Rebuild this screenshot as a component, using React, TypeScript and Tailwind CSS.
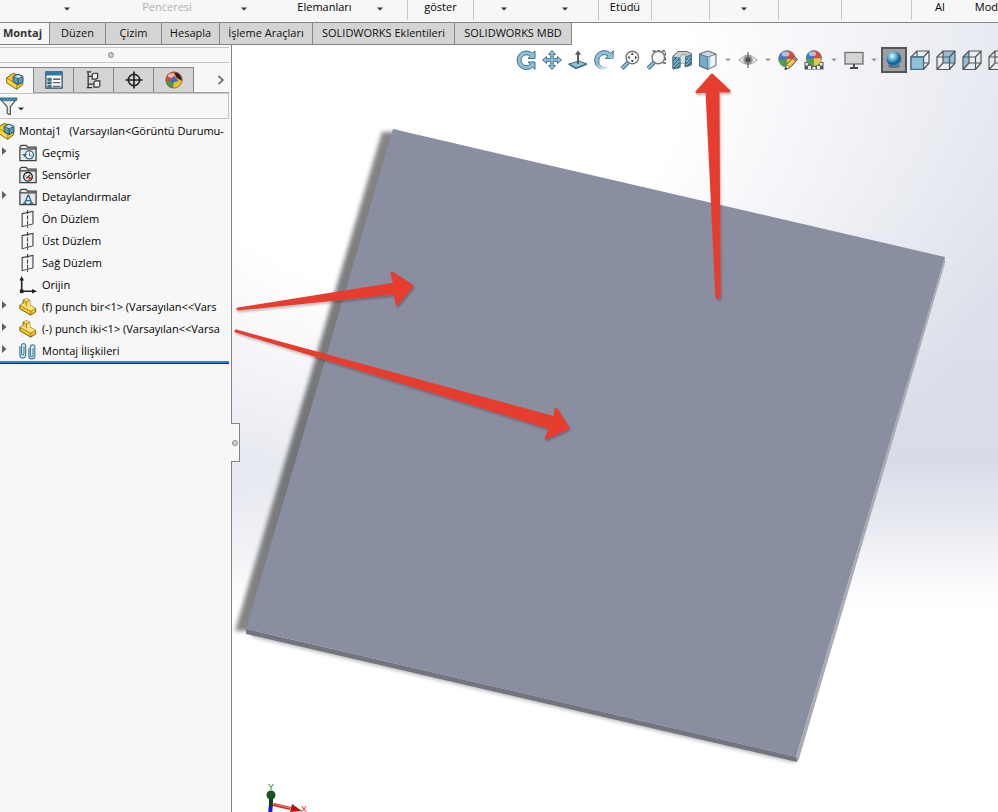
import type { ReactNode } from "react";
import clsx from "clsx";

const INK = "#3f3f3f";
const STEEL = "#3f6f87";
const SKY = "#8fc1da";

type IconProps = { children: ReactNode; size?: "sm" | "md" };

function Icon({ children, size = "md" }: IconProps) {
  return (
    <svg
      viewBox="0 0 20 20"
      aria-hidden="true"
      className={clsx("shrink-0", size === "sm" ? "size-[18px]" : "size-5")}
      fill="none"
    >
      {children}
    </svg>
  );
}

function Caret({ muted = false }: { muted?: boolean }) {
  return (
    <svg viewBox="0 0 6 4" aria-hidden="true" className="h-1 w-1.5 shrink-0">
      <path d="M0 0.5H6L3 3.5Z" fill={muted ? "#9a9a9a" : "#333"} />
    </svg>
  );
}

function Grip() {
  return (
    <svg viewBox="0 0 6 6" aria-hidden="true" className="size-1.5 shrink-0">
      <circle cx="3" cy="3" r="2.5" fill="#d0d0d0" stroke="#8b8b8b" />
    </svg>
  );
}

/* ---------- Ribbon ---------- */

function MenuCaret({ label, className }: { label: string; className: string }) {
  return (
    <button type="button" aria-label={label} className={clsx("flex items-center justify-center pt-1", className)}>
      <Caret />
    </button>
  );
}

function Ribbon() {
  return (
    <header className="flex h-[23px] shrink-0 items-start overflow-hidden border-b border-[#858585] bg-[#f7f7f7] text-[11px] leading-[14px] whitespace-nowrap text-black [&>div]:h-5 [&>div]:shrink-0 [&>div]:border-r [&>div]:border-[#c6c6c6] [&_button]:h-3.5">
      <div className="flex w-[408px]">
        <MenuCaret label="Bileşen Ekle" className="w-[134px]" />
        <button type="button" disabled className="w-[66px] text-center text-[#b0b0b0]">Penceresi</button>
        <MenuCaret label="Pencere seçenekleri" className="w-[88px]" />
        <button type="button" className="w-[73px] text-center">Elemanları</button>
        <MenuCaret label="Eleman seçenekleri" className="w-[38px]" />
      </div>
      <div className="flex w-[66px] justify-center">
        <button type="button">göster</button>
      </div>
      <div className="flex w-[125px]">
        <MenuCaret label="Montaj unsurları" className="w-[60px]" />
        <MenuCaret label="Referans geometrisi" className="w-[62px]" />
      </div>
      <div className="flex w-[53px] justify-center">
        <button type="button">Etüdü</button>
      </div>
      <div className="w-[58px]" />
      <div className="flex w-[69px]">
        <MenuCaret label="Patlatılmış görünüm" className="w-[68px]" />
      </div>
      <div className="w-[63px]" />
      <div className="w-[70px]" />
      <div className="flex w-[120px] gap-[30px] pl-[23px]">
        <button type="button">Al</button>
        <button type="button">Mod</button>
      </div>
    </header>
  );
}

const TABS = [
  { label: "Düzen", width: "w-14" },
  { label: "Çizim", width: "w-14" },
  { label: "Hesapla", width: "w-[58px]" },
  { label: "İşleme Araçları", width: "w-[93px]" },
  { label: "SOLIDWORKS Eklentileri", width: "w-[142px]" },
  { label: "SOLIDWORKS MBD", width: "w-[117px]" },
];

function CommandTabs() {
  return (
    <nav className="flex h-[22px] shrink-0 text-[11px] whitespace-nowrap">
      <button
        type="button"
        className="w-[49px] shrink-0 border-b border-[#858585] bg-[#f7f7f7] pr-1 text-center font-bold text-[#333]"
      >
        Montaj
      </button>
      <div className="flex border-r border-[#858585]">
        {TABS.map((tab) => (
          <button
            key={tab.label}
            type="button"
            className={clsx("shrink-0 border-b border-l border-[#858585] bg-[#d4d4d4] text-[#111]", tab.width)}
          >
            {tab.label}
          </button>
        ))}
      </div>
    </nav>
  );
}

/* ---------- Feature tree ---------- */

const partShape = (
  <>
    <path d="M1 8L4.5 6V2.5L8.5 0.8L12 2.5V8L18.5 11.5V15.5L13 19L1 12Z" fill="#f6c62c" stroke="#6d5200" strokeLinejoin="round" />
    <path d="M4.5 2.5L8.5 4.5L12 2.5L8.5 0.8ZM1 8L4.5 6L8.5 8.5V4.5L12 2.5V8L18.5 11.5L13 14.5Z" fill="#fbe27c" />
    <path d="M4.5 2.5L8.5 4.5V9.5M1 8L13 14.8L18.5 11.5M13 14.8V19M8.5 4.5L12 2.5" stroke="#8a6a08" strokeWidth="0.8" />
  </>
);

const assemblyShape = (
  <>
    <path d="M0.8 6.5L8 1.5L18.5 5V14L12 19.2L0.8 12Z" fill="#f6c62c" stroke="#6d5200" strokeLinejoin="round" />
    <path d="M0.8 6.5L12 14V19.2L0.8 12Z" fill="#ffd83d" stroke="#8a6a08" strokeWidth="0.8" />
    <path d="M8 5L13.5 2.5L18.8 5V11.2L13.5 14L8 11Z" fill="#5b9db8" stroke="#154a61" />
    <path d="M8 5L13.5 7.5L18.8 5L13.5 2.5Z" fill="#b9e0ee" stroke="#154a61" strokeWidth="0.8" />
    <path d="M13.5 7.5V14" stroke="#154a61" />
  </>
);

const folderShape = (
  <path d="M1 18.5V3.5L2.5 1.5H8L9.5 3.5H19V18.5ZM1 5.5H19" fill="#e8e8e8" stroke={INK} strokeWidth="1.4" />
);

const planeShape = (
  <>
    <path d="M3.5 4L15.5 1.5V15.5L3.5 18.5Z" stroke={INK} strokeWidth="1.2" />
    <path d="M9.5 0V20" stroke={INK} strokeWidth="1.2" strokeDasharray="4.5 1.5" />
  </>
);

const treeIcons = {
  history: (
    <>
      {folderShape}
      <circle cx="11.5" cy="12" r="4.5" fill="#fff" stroke="#2f6f8f" strokeWidth="1.5" />
      <path d="M11.5 9.5V12.5L14 13.5" stroke="#2f6f8f" strokeWidth="1.2" />
      <path d="M3.5 11L9 11L6.2 14.5Z" fill="#2f6f8f" />
    </>
  ),
  sensors: (
    <>
      {folderShape}
      <circle cx="10" cy="12" r="4.8" fill="#fff" stroke="#222" strokeWidth="1.5" />
      <path d="M10 12L14 12A4 4 0 0 1 11 16Z" fill="#e23a22" />
      <path d="M8 14L12.5 9.5" stroke="#222" strokeWidth="1.3" />
      <circle cx="7.5" cy="11" r="0.8" fill="#2f6f8f" />
    </>
  ),
  annotations: (
    <>
      {folderShape}
      <path
        d="M4.5 17H8.5M11.5 17H16M6.2 17L10 8H10.8L14.2 17M7.5 14H13"
        stroke="#286f91"
        strokeWidth="1.5"
      />
    </>
  ),
  plane: planeShape,
  origin: (
    <>
      <path d="M3 3V17H17" stroke="#222" strokeWidth="1.8" />
      <path d="M0.5 5L3 0L5.5 5ZM14.5 14.5L20 17L14.5 19.5Z" fill="#222" />
      <rect x="1" y="15" width="4" height="4" fill="#222" />
    </>
  ),
  part: partShape,
  mates: (
    <g stroke="#3a7d9b" strokeWidth="1.3" strokeLinecap="round">
      <path d="M1 5V14.5A3.2 3.2 0 0 0 7.4 14.5V3.5A2.4 2.4 0 0 0 2.8 3.5V13.5A1.4 1.4 0 0 0 5.5 13.5V5" />
      <path d="M11 7V15.5A3.2 3.2 0 0 0 17.6 15.5V5.5A2.4 2.4 0 0 0 12.8 5.5V15A1.4 1.4 0 0 0 15.6 15V7" />
    </g>
  ),
};

type TreeNode = { label: string; icon: keyof typeof treeIcons; expandable?: boolean };

const TREE: TreeNode[] = [
  { label: "Geçmiş", icon: "history", expandable: true },
  { label: "Sensörler", icon: "sensors" },
  { label: "Detaylandırmalar", icon: "annotations", expandable: true },
  { label: "Ön Düzlem", icon: "plane" },
  { label: "Üst Düzlem", icon: "plane" },
  { label: "Sağ Düzlem", icon: "plane" },
  { label: "Orijin", icon: "origin" },
  { label: "(f) punch bir<1> (Varsayılan<<Vars", icon: "part", expandable: true },
  { label: "(-) punch iki<1> (Varsayılan<<Varsa", icon: "part", expandable: true },
  { label: "Montaj İlişkileri", icon: "mates", expandable: true },
];

const PANEL_TABS: { label: string; icon: ReactNode }[] = [
  {
    label: "Özellik yöneticisi",
    icon: (
      <>
        <rect x="1" y="1" width="18" height="18" fill="#fff" stroke="#224c60" strokeWidth="1.4" />
        <path d="M1 1H19V5H1Z" fill="#2c7ba2" />
        <path d="M3 8H7V10.5H3ZM3 12H7V14.5H3ZM3 16H7V18H3Z" fill="#347f9f" stroke="#173f50" strokeWidth="0.6" />
        <path d="M9 9H17M9 13H17M9 17H17" stroke="#333" strokeWidth="1.2" />
      </>
    ),
  },
  {
    label: "Konfigürasyon yöneticisi",
    icon: (
      <>
        <path d="M2 1H7M3.5 1V18.5M2 18.5H8M3.5 6H8M3.5 14.5H10" stroke="#333" strokeWidth="1.4" />
        <path d="M8 4L9.5 2.5H14V7.5L12.5 9H8ZM10 12.5L11.5 11H16.5V16.5L15 18H10Z" fill="#eee" stroke="#333" strokeWidth="1.3" />
      </>
    ),
  },
  {
    label: "DimXpert yöneticisi",
    icon: (
      <>
        <circle cx="10" cy="10" r="6.3" stroke="#222" strokeWidth="1.8" />
        <path d="M10 0.5V19.5M0.5 10H19.5" stroke="#222" strokeWidth="1.8" />
      </>
    ),
  },
  {
    label: "Görüntü yöneticisi",
    icon: (
      <>
        <circle cx="10" cy="10" r="9.3" fill="#e9c02a" />
        <path d="M10 11L0.8 11A9.3 9.3 0 0 1 9 0.8Z" fill="#df4440" />
        <path d="M9 0.8A9.3 9.3 0 0 1 19.3 11L13 8Z" fill="#c23a34" />
        <path d="M10 11L0.8 11A9.3 9.3 0 0 0 9 19.3Z" fill="#4a9a44" />
        <path d="M5 12L10 5L15 11L10 12.5Z" fill="#3d68cc" />
        <path d="M11 2Q17.5 3 18 10Q12 8 11 2Z" fill="#1d1d1d" />
        <ellipse cx="6.5" cy="5" rx="3.2" ry="2.4" fill="#fff" opacity="0.6" />
        <circle cx="10" cy="10" r="9" stroke="#6d5a3a" strokeWidth="0.7" />
      </>
    ),
  },
];

function FeaturePanel() {
  return (
    <aside className="relative z-10 w-[232px] shrink-0 border-r border-[#858585] bg-[#f7f7f7] pt-0.5 pr-0.5 text-[11px] leading-[20px] text-black">
      <div className="flex h-4 items-center justify-center border-y border-[#c6c6c6] pr-2">
        <Grip />
      </div>
      <div className="mt-1 flex h-[26px] border-b border-[#a0a0a0]">
        <button
          type="button"
          aria-label="Unsur ağacı"
          className="-mb-px flex w-[33px] items-center border-t border-[#858585] bg-[#f7f7f7] pl-1.5"
        >
          <Icon size="sm">{assemblyShape}</Icon>
        </button>
        <div className="flex border-r border-[#858585]">
          {PANEL_TABS.map((tab) => (
            <button
              key={tab.label}
              type="button"
              aria-label={tab.label}
              className="flex w-10 items-center justify-center border-t border-l border-[#858585] bg-[#d4d4d4]"
            >
              <Icon size="sm">{tab.icon}</Icon>
            </button>
          ))}
        </div>
        <button type="button" aria-label="Daha fazla" className="flex flex-1 items-center justify-end pr-1">
          <svg viewBox="0 0 8 10" aria-hidden="true" className="h-2.5 w-2" fill="none">
            <path d="M1.5 0.8L5.8 5L1.5 9.2" stroke="#707070" strokeWidth="1.8" />
          </svg>
        </button>
      </div>
      <button
        type="button"
        aria-label="Ağacı filtrele"
        className="flex h-[26px] w-full items-center border border-l-0 border-[#c6c6c6]"
      >
        <Icon size="sm">
          <path d="M0 2L8 11V18L11.5 20V11L18.5 2Z" fill="#e6e6e6" stroke="#444" strokeWidth="1.2" />
          <path d="M0 1H18.5V4H2Z" fill="#3a8fb5" stroke="#1e5f80" strokeWidth="0.8" />
        </Icon>
        <span className="pt-1.5">
          <Caret />
        </span>
      </button>
      <ul className="overflow-hidden whitespace-nowrap">
        <li className="flex h-[22px] items-center gap-1 pt-0.5">
          <span className="-ml-[3px] flex">
            <Icon size="sm">{assemblyShape}</Icon>
          </span>
          <span className="flex gap-2">
            <span>Montaj1</span>
            <span>(Varsayılan&lt;Görüntü Durumu-</span>
          </span>
        </li>
        {TREE.map((node) => (
          <li key={node.label} className="flex h-[22px] items-center pt-0.5">
            <span className="flex w-[19px] shrink-0 pl-0.5">
              {node.expandable && (
                <svg viewBox="0 0 5 8" aria-hidden="true" className="mb-1 h-2 w-[5px]">
                  <path d="M0 0L4.5 4L0 8Z" fill="#606060" />
                </svg>
              )}
            </span>
            <Icon size="sm">{treeIcons[node.icon]}</Icon>
            <span className="pl-[5px]">{node.label}</span>
          </li>
        ))}
      </ul>
      <div className="h-[3px] border-b border-[#14267f] bg-[#2389c9]" />
      <button
        type="button"
        aria-label="Paneli daralt"
        className="absolute top-[378px] -right-[9px] flex h-[39px] w-[9px] items-center justify-center border border-l-0 border-[#858585] bg-[#f7f7f7]"
      >
        <Grip />
      </button>
    </aside>
  );
}

/* ---------- Heads-up view toolbar ---------- */

const colorBall = (
  <>
    <circle cx="9" cy="9" r="8.5" fill="#4f9f46" />
    <path d="M9 9V0.5A8.5 8.5 0 0 0 0.6 10Z" fill="#4477cf" />
    <path d="M9 9V0.5A8.5 8.5 0 0 1 17.5 9Z" fill="#d84a42" />
    <path d="M9 9H17.5A8.5 8.5 0 0 1 9 17.5Z" fill="#e5c64b" />
    <ellipse cx="7.5" cy="4" rx="4" ry="2.5" fill="#fff" opacity="0.55" />
    <circle cx="9" cy="9" r="8.2" stroke="#777" strokeWidth="0.6" />
  </>
);

const lens = (
  <>
    <path d="M2 18.5L8.5 12" stroke={STEEL} strokeWidth="4" />
    <path d="M2.2 18.3L8 12.5" stroke={SKY} strokeWidth="2.2" />
    <circle cx="12.3" cy="7.5" r="6.3" fill="#f4f6f7" stroke="#777" strokeWidth="1.4" />
  </>
);

const wireCube = <path d="M1 7H13.5V19.5H1ZM7 1H19V13H7ZM1 7L7 1M13.5 7L19 1M13.5 19.5L19 13M1 19.5L7 13" stroke="#555" strokeWidth="1.2" />;

type Tool = { label: string; icon: ReactNode; menu?: boolean; active?: boolean };

const TOOLS: Tool[] = [
  {
    label: "Önceki görünüm",
    icon: (
      <path
        d="M19 1V8.5H12L14.3 6.3A5.5 5.5 0 1 0 14.3 14.3L12 12H19V19.3L16.5 17.3A9.3 9.3 0 1 1 16.5 3.2Z"
        fill={SKY}
        stroke={STEEL}
        strokeLinejoin="round"
      />
    ),
  },
  {
    label: "Kaydır",
    icon: (
      <path
        d="M10 0.5L13.5 4.5H11.3V8.7H15.5V6.5L19.5 10L15.5 13.5V11.3H11.3V15.5H13.5L10 19.5L6.5 15.5H8.7V11.3H4.5V13.5L0.5 10L4.5 6.5V8.7H8.7V4.5H6.5Z"
        fill={SKY}
        stroke={STEEL}
        strokeLinejoin="round"
      />
    ),
  },
  {
    label: "Dik bak",
    icon: (
      <>
        <path d="M0.8 14L11 11L18.8 14L8 18.5Z" fill={SKY} stroke={STEEL} />
        <path d="M0.8 14L8 18.5L18.8 14" stroke={STEEL} strokeWidth="1.5" />
        <path d="M10 14V3" stroke="#5a5a5a" strokeWidth="2" />
        <path d="M6.8 4.8L10 0.5L13.2 4.8Z" fill="#5a5a5a" />
      </>
    ),
  },
  {
    label: "Döndür",
    icon: (
      <>
        <defs>
          <linearGradient id="rotate-fade" x1="0" y1="0" x2="0.6" y2="1">
            <stop offset="0.55" stopColor={STEEL} />
            <stop offset="1" stopColor={STEEL} stopOpacity="0.05" />
          </linearGradient>
          <linearGradient id="rotate-fill" x1="0" y1="0" x2="0.6" y2="1">
            <stop offset="0.6" stopColor={SKY} />
            <stop offset="1" stopColor={SKY} stopOpacity="0.15" />
          </linearGradient>
        </defs>
        <path
          d="M19.2 0.8V8.5H11.5L14 6A5.5 5.5 0 0 0 4.8 10.5A6 6 0 0 0 13 17L12 19.3A9 9 0 0 1 0.8 11A9.5 9.5 0 0 1 16.7 3.2Z"
          fill="url(#rotate-fill)"
          stroke="url(#rotate-fade)"
          strokeLinejoin="round"
        />
      </>
    ),
  },
  {
    label: "Sığdırmak için yakınlaştır",
    icon: (
      <>
        {lens}
        <path d="M12.3 2.8L14 4.8H10.6ZM12.3 12.2L14 10.2H10.6ZM7.6 7.5L9.6 5.8V9.2ZM17 7.5L15 5.8V9.2Z" fill="#333" />
      </>
    ),
  },
  {
    label: "Alana yakınlaştır",
    icon: (
      <>
        <path d="M6.5 1H19.3V13H15" stroke="#555" strokeWidth="1.3" strokeDasharray="3 1.8" />
        {lens}
      </>
    ),
  },
  {
    label: "Kesit görünümü",
    icon: (
      <>
        <path d="M1 6L6 1.5H14L19.3 3.5V15L13 17V8L8 7.5V17.5L1 19Z" fill="#c9ced1" stroke="#666" />
        <path d="M8 7.5L10 4.5H14V8V13L8 13.5Z" fill="#dcdfe0" stroke="#888" strokeWidth="0.7" />
        <path d="M1 7L8 8.5V17L1 19ZM13.5 7L19 5V14.5L13.5 16.5Z" fill="#7ab0ca" stroke={STEEL} />
        <path d="M1.5 11L4 8M1.5 15L7 9M2 18L7.5 12.5M5 18L7.5 15.5M14 10L17 6.5M14 14L19 8.5M15 16L19 12" stroke="#215069" />
      </>
    ),
  },
  {
    label: "Görünüm yönlendirmesi",
    menu: true,
    icon: (
      <>
        <path d="M1.5 4L9.5 1L18 4V15.5L10 19.3L1.5 16Z" fill="#eef3f5" stroke="#666" strokeLinejoin="round" />
        <path d="M1.5 4L10 7V19.3L1.5 16Z" fill="#76abc4" stroke={STEEL} />
        <path d="M1.5 4L9.5 1L18 4L10 7Z" fill="#c4dce6" stroke="#777" />
        <path d="M10.5 7.5L12.5 6.8V17.5L10.5 18.5Z" fill="#a9d2e3" />
      </>
    ),
  },
  {
    label: "Ögeleri gizle/göster",
    menu: true,
    icon: (
      <>
        <path d="M0.8 10Q10 0 19.2 10Q10 19 0.8 10Z" fill="#e4e4e4" stroke="#aaa" />
        <circle cx="10" cy="9.8" r="4.8" fill="#999" />
        <circle cx="10" cy="9.8" r="2.5" fill="#444" />
        <path d="M10 2V18" stroke="#666" strokeWidth="1.2" />
      </>
    ),
  },
  {
    label: "Görünümü düzenle",
    icon: (
      <>
        {colorBall}
        <path d="M7 19.5L8.5 14.5L16 6.5L19.5 9.5L12 17.5Z" fill="#f2c94c" stroke="#555" strokeLinejoin="round" />
        <path d="M16 6.5L19.5 9.5L17.7 11.4L14.3 8.3Z" fill="#d77a6d" stroke="#555" strokeWidth="0.7" />
        <path d="M7 19.5L8.5 14.5L12 17.5Z" fill="#f6e7c7" stroke="#555" strokeWidth="0.7" />
        <path d="M7 19.5L7.7 17.3L9.5 18.8Z" fill="#222" />
      </>
    ),
  },
  {
    label: "Sahne uygula",
    menu: true,
    icon: (
      <>
        <path d="M0.5 12H19.5V19.5H0.5Z" fill="#555" />
        <path d="M1.5 13H4V15.5H1.5ZM16 13H18.5V15.5H16ZM4 16H7V19H4ZM13 16H16V19H13ZM8.5 17H11.5V19H8.5Z" fill="#eee" />
        <g transform="translate(1.5 0) scale(0.93)">{colorBall}</g>
      </>
    ),
  },
  {
    label: "Görünüm ayarları",
    menu: true,
    icon: (
      <>
        <rect x="1" y="2.5" width="18" height="11.5" fill="#d4d4d4" stroke="#707070" strokeWidth="1.3" />
        <path d="M10 14V17.5M6 18H14" stroke="#4a4a4a" strokeWidth="2" />
      </>
    ),
  },
  {
    label: "Gölgeli",
    active: true,
    icon: (
      <>
        <defs>
          <radialGradient id="shaded-ball" cx="0.38" cy="0.3" r="0.7">
            <stop offset="0" stopColor="#e8fbff" />
            <stop offset="0.35" stopColor="#65b8dc" />
            <stop offset="0.75" stopColor="#145a83" />
            <stop offset="1" stopColor="#3c93bb" />
          </radialGradient>
        </defs>
        <ellipse cx="10" cy="16" rx="6" ry="2" fill="#555" opacity="0.7" />
        <circle cx="10" cy="9" r="7.5" fill="url(#shaded-ball)" />
      </>
    ),
  },
  {
    label: "Ön",
    icon: (
      <>
        {wireCube}
        <path d="M1 7H13.5V19.5H1Z" fill={SKY} stroke={STEEL} strokeWidth="1.3" />
      </>
    ),
  },
  {
    label: "Arka",
    icon: (
      <>
        <path d="M7 1H19V13H7Z" fill={SKY} />
        {wireCube}
      </>
    ),
  },
  {
    label: "Sol",
    icon: (
      <>
        <path d="M1 7L7 1V13L1 19.5Z" fill={SKY} />
        {wireCube}
      </>
    ),
  },
  {
    label: "Sağ",
    icon: (
      <>
        <path d="M13.5 7L19 1V13L13.5 19.5Z" fill={SKY} />
        {wireCube}
      </>
    ),
  },
];

function ViewToolbar() {
  return (
    <div role="toolbar" aria-label="Görünüm" className="relative flex overflow-hidden pt-0.5 pl-[281px]">
      {TOOLS.map((tool) => (
        <div key={tool.label} className="flex shrink-0">
          <button
            type="button"
            aria-label={tool.label}
            className={clsx(
              "flex size-[26px] items-center justify-center",
              tool.active && "border-2 border-[#555] bg-[#9c9ea1]",
            )}
          >
            <Icon>{tool.icon}</Icon>
          </button>
          {tool.menu && (
            <button type="button" aria-label={`${tool.label} menüsü`} className="flex w-3.5 items-center justify-center">
              <Caret muted />
            </button>
          )}
        </div>
      ))}
    </div>
  );
}

/* ---------- Model canvas ---------- */

// Drawn in window coordinates; the viewBox starts at the canvas corner.
function ModelCanvas() {
  return (
    <svg
      viewBox="232 45 766 767"
      preserveAspectRatio="xMinYMin meet"
      className="absolute inset-0 h-full w-full"
      role="img"
      aria-label="Montaj modeli"
    >
      <defs>
        <filter id="soft" x="-10%" y="-10%" width="120%" height="120%">
          <feGaussianBlur stdDeviation="2" />
        </filter>
        <filter id="drop" x="-10%" y="-10%" width="120%" height="130%">
          <feDropShadow dx="1" dy="2" stdDeviation="1" floodColor="#000" floodOpacity="0.25" />
        </filter>
        <linearGradient id="side-shade" x1="0" y1="0" x2="0" y2="1">
          <stop offset="0" stopColor="#858585" />
          <stop offset="0.65" stopColor="#727476" />
          <stop offset="1" stopColor="#868686" />
        </linearGradient>
      </defs>

      <path d="M382 132L400 132L255 631L235 631Z" fill="url(#side-shade)" filter="url(#soft)" />
      <path d="M252 633L795 759V762L252 636Z" fill="#888" filter="url(#soft)" />
      <path d="M246 629L797 757V762L246 634Z" fill="#72757e" />
      <path d="M945 257V263L798 762L796 757Z" fill="#a9abb4" />
      <path d="M393 129L945 257L944 260L796 757L246 629Z" fill="#8a8ea1" />

      <g fill="#e63c2f" stroke="#e63c2f" strokeWidth="3" strokeLinejoin="round" filter="url(#drop)">
        <path d="M238 309L395 284L392 273L412 286L397 304L395 293Z" />
        <path d="M236 331L555 418L556 409L568 428L546 438L551 428Z" />
        <path d="M717 297L707 91L697 92L712 75L729 91L718 91L719 297Z" />
      </g>

      <g fontFamily="Liberation Sans, sans-serif" fontSize="9">
        <path d="M269 804L273 804L272 814H268Z" fill="#1a1acc" />
        <path d="M269 797H273V806H269Z" fill="#123f16" />
        <circle cx="271" cy="795" r="4.5" fill="#17571c" />
        <path d="M274 803L291 807L290 810L273 806Z" fill="#d42020" />
        <path d="M292 804L302 811L290 812Z" fill="#b01515" />
        <path d="M275 804.5L291 808.3" stroke="#f79a9a" strokeWidth="0.8" />
        <text x="268" y="790" fill="#158a1c">Y</text>
        <text x="301" y="812" fill="#e02020">X</text>
      </g>
    </svg>
  );
}

export default function App() {
  return (
    <div className="flex min-h-screen flex-col bg-white font-['Open_Sans','Noto_Sans',sans-serif]">
      <Ribbon />
      <div className="flex flex-1 flex-col bg-[radial-gradient(ellipse_64%_70%_at_42%_5%,#fff_42%,#ffffff00_100%),linear-gradient(#e4e7ef_0%,#dbdee9_45%,#d9dce8_56%,#fff_74%)]">
        <CommandTabs />
        <main className="flex flex-1">
          <FeaturePanel />
          <section className="relative min-w-0 flex-1 overflow-hidden">
            <ModelCanvas />
            <ViewToolbar />
          </section>
        </main>
      </div>
    </div>
  );
}
